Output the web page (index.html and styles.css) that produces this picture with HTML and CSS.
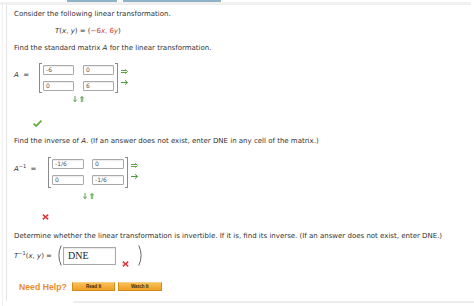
FILE: index.html
```html
<!DOCTYPE html>
<html>
<head>
<meta charset="utf-8">
<link rel="stylesheet" href="styles.css">
</head>
<body>
<div class="tabs"><div class="tab tab1"></div><div class="tab tab2"></div></div>
<div class="band"></div>
<div class="page">
  <div class="content">
    <p class="line l1">Consider the following linear transformation.</p>
    <p class="line l2 indent"><i>T</i>(<i>x</i>, <i>y</i>) = (<span class="red">−6<i>x</i>, 6<i>y</i></span>)</p>
    <p class="line l3">Find the standard matrix <i>A</i> for the linear transformation.</p>

    <div class="mrow m1">
      <div class="mlabel"><i>A</i> &nbsp;=</div>
      <div class="mwrap">
        <div class="matrix">
          <div class="br br-l"></div>
          <div class="grid">
            <div class="cell">-6</div><div class="cell">0</div>
            <div class="cell">0</div><div class="cell">6</div>
          </div>
          <div class="br br-r"></div>
          <div class="rowarrows">
            <svg width="7" height="5" viewBox="0 0 7 5"><path d="M0 1.5H5.5M0 3.5H5.5M4.3 0.3L6.6 2.5L4.3 4.7" fill="none" stroke="#4f9a3c" stroke-width="0.9"/></svg>
            <svg width="7" height="5" viewBox="0 0 7 5"><path d="M0 2.5H6M4 0.3L6.6 2.5L4 4.7" fill="none" stroke="#4f9a3c" stroke-width="1"/></svg>
          </div>
        </div>
        <div class="colarrows">
          <svg width="4" height="6" viewBox="0 0 4 6"><path d="M2 0V5.5M0.3 3.6L2 5.7L3.7 3.6" fill="none" stroke="#4f9a3c" stroke-width="0.9"/></svg>
          <svg width="4" height="6" viewBox="0 0 4 6"><path d="M1.3 0.8V6M2.7 0.8V6M0.2 2.4L2 0.3L3.8 2.4" fill="none" stroke="#4f9a3c" stroke-width="0.8"/></svg>
        </div>
      </div>
    </div>

    <div class="mark check">
      <svg width="9" height="7" viewBox="0 0 9 7"><path d="M0.6 3.6L3.1 6L8.4 0.7" fill="none" stroke="#5aaa3c" stroke-width="1.7"/></svg>
    </div>

    <p class="line l4">Find the inverse of <i>A</i>. (If an answer does not exist, enter DNE in any cell of the matrix.)</p>

    <div class="mrow m2">
      <div class="mlabel"><i>A</i><sup>−1</sup> &nbsp;=</div>
      <div class="mwrap">
        <div class="matrix">
          <div class="br br-l"></div>
          <div class="grid">
            <div class="cell">-1/6</div><div class="cell">0</div>
            <div class="cell">0</div><div class="cell">-1/6</div>
          </div>
          <div class="br br-r"></div>
          <div class="rowarrows">
            <svg width="7" height="5" viewBox="0 0 7 5"><path d="M0 1.5H5.5M0 3.5H5.5M4.3 0.3L6.6 2.5L4.3 4.7" fill="none" stroke="#4f9a3c" stroke-width="0.9"/></svg>
            <svg width="7" height="5" viewBox="0 0 7 5"><path d="M0 2.5H6M4 0.3L6.6 2.5L4 4.7" fill="none" stroke="#4f9a3c" stroke-width="1"/></svg>
          </div>
        </div>
        <div class="colarrows">
          <svg width="4" height="6" viewBox="0 0 4 6"><path d="M2 0V5.5M0.3 3.6L2 5.7L3.7 3.6" fill="none" stroke="#4f9a3c" stroke-width="0.9"/></svg>
          <svg width="4" height="6" viewBox="0 0 4 6"><path d="M1.3 0.8V6M2.7 0.8V6M0.2 2.4L2 0.3L3.8 2.4" fill="none" stroke="#4f9a3c" stroke-width="0.8"/></svg>
        </div>
      </div>
    </div>

    <div class="mark cross1">
      <svg width="7" height="6" viewBox="0 0 7 6"><path d="M0.8 0.6L6.2 5.4M6.2 0.6L0.8 5.4" fill="none" stroke="#e0393a" stroke-width="1.5"/></svg>
    </div>

    <p class="line l5">Determine whether the linear transformation is invertible. If it is, find its inverse. (If an answer does not exist, enter DNE.)</p>

    <div class="trow">
      <div class="tlabel"><i>T</i><sup>−1</sup>(<i>x</i>, <i>y</i>) =</div>
      <svg class="paren" width="6" height="21" viewBox="0 0 6 21"><path d="M5.2 0.5Q0.6 10.5 5.2 20.5" fill="none" stroke="#555" stroke-width="0.9"/></svg>
      <div class="dne">DNE</div>
      <svg class="cross2" width="7" height="6" viewBox="0 0 7 6"><path d="M0.8 0.6L6.2 5.4M6.2 0.6L0.8 5.4" fill="none" stroke="#e0393a" stroke-width="1.5"/></svg>
      <svg class="paren rp" width="6" height="21" viewBox="0 0 6 21"><path d="M0.8 0.5Q5.4 10.5 0.8 20.5" fill="none" stroke="#555" stroke-width="0.9"/></svg>
    </div>

    <div class="help">
      <span class="need">Need Help?</span>
      <span class="btn">Read It</span>
      <span class="btn">Watch It</span>
    </div>
  </div>
  <div class="bottom"></div>
</div>
</body>
</html>
```
FILE: styles.css
```css
html, body {
  margin: 0;
  padding: 0;
  background: #fff;
}
body {
  width: 474px;
  height: 306px;
  overflow: hidden;
  font-family: "DejaVu Sans", Verdana, sans-serif;
  font-size: 7px;
  color: #333;
}
.tabs {
  display: flex;
  gap: 6px;
  height: 2px;
  padding-left: 67px;
}
.tab {
  height: 2px;
  background: #8fb2c6;
}
.tab1 { width: 50px; }
.tab2 { width: 98px; }
.band {
  height: 3px;
  margin-right: 3px;
  background: #f0f0f0;
}
.page {
  margin-left: 2px;
  border-left: 1px solid #f2f2f2;
  height: 301px;
  display: flex;
  flex-direction: column;
}
.content {
  margin-left: 3px;
  border-left: 1px solid #e4e4e4;
  padding-left: 7px;
  flex: 1;
}
.line {
  margin: 0;
  line-height: 10px;
  height: 10px;
  white-space: nowrap;
}
.l1 { margin-top: 4px; }
.l2 { margin-top: 7px; }
.l3 { margin-top: 6.5px; }
.indent { padding-left: 41px; }
.red { color: #c9413e; }
sup {
  font-size: 5px;
  vertical-align: 3px;
  line-height: 0;
}

.mrow {
  display: flex;
  align-items: flex-start;
}
.m1 { margin-top: 10.5px; }
.m2 { margin-top: 10.5px; }
.mlabel {
  white-space: nowrap;
  line-height: 10px;
}
.m1 .mlabel { width: 25px; margin-top: 7px; }
.m2 .mlabel { width: 34px; margin-top: 7px; }
.mwrap {
  display: flex;
  flex-direction: column;
}
.matrix {
  display: flex;
  align-items: stretch;
}
.br {
  width: 2px;
  border: 1px solid #8a8a8a;
}
.br-l { border-right: none; }
.br-r { border-left: none; }
.grid {
  display: grid;
  padding: 2px 1px;
}
.m1 .grid {
  grid-template-columns: 31px 31px;
  column-gap: 9px;
  row-gap: 6px;
}
.m2 .grid {
  grid-template-columns: 32px 32px;
  column-gap: 8px;
  row-gap: 6px;
  padding: 2px 1px 3px;
}
.cell {
  box-sizing: border-box;
  height: 10px;
  border: 1px solid #a9a9a9;
  border-radius: 1px;
  box-shadow: inset 0 1px 1px rgba(0,0,0,0.08);
  font-size: 6px;
  line-height: 7px;
  padding-left: 2px;
  color: #555;
  background: #fff;
}
.rowarrows {
  display: flex;
  flex-direction: column;
  gap: 6px;
  margin-left: 3px;
  padding-top: 6px;
}
.rowarrows svg { display: block; }
.colarrows {
  display: flex;
  justify-content: center;
  gap: 3px;
  padding-right: 10px;
}
.m1 .colarrows { margin-top: 3px; }
.m2 .colarrows { margin-top: 5px; }
.colarrows svg { display: block; }

.mark svg { display: block; }
.check { margin-top: 18px; margin-left: 19px; }
.l4 { margin-top: 9px; }
.cross1 { margin-top: 15px; margin-left: 28px; }
.l5 { margin-top: 11px; }

.trow {
  display: flex;
  align-items: center;
  margin-top: 4px;
  height: 22px;
}
.tlabel {
  white-space: nowrap;
  width: 42px;
  margin-top: 1px;
}
.paren { display: block; }
.dne {
  box-sizing: border-box;
  width: 53px;
  height: 18px;
  margin-left: 1px;
  border: 1px solid #a9a9a9;
  box-shadow: inset 0 1px 2px rgba(0,0,0,0.1);
  font-family: "Liberation Serif", "Times New Roman", serif;
  font-size: 10px;
  line-height: 16px;
  padding-left: 4px;
  color: #222;
}
.cross2 {
  display: block;
  margin-left: 6px;
  align-self: flex-end;
  margin-bottom: 0;
}
.rp { margin-left: 9px; }

.help {
  display: flex;
  align-items: center;
  margin-top: 15px;
  padding-left: 5px;
}
.need {
  font-family: "Liberation Sans", Arial, sans-serif;
  font-weight: bold;
  font-size: 8.7px;
  color: #e98c2c;
  margin-right: 5px;
  white-space: nowrap;
}
.btn {
  box-sizing: border-box;
  height: 8.5px;
  display: flex;
  align-items: center;
  justify-content: center;
  font-family: "Liberation Sans", Arial, sans-serif;
  font-weight: bold;
  font-size: 4.6px;
  color: #3a2a10;
  background: linear-gradient(#f8c056, #ef9f26);
  border: 1px solid #d58a1c;
  border-top-color: #f7cf84;
  margin-right: 2.5px;
}
.btn:nth-of-type(2) { width: 43.5px; }
.btn:nth-of-type(3) { width: 44px; }

.bottom {
  height: 2px;
  margin-left: 70px;
  margin-bottom: 3px;
  background: #ececec;
  border-left: 1px solid #f0f0f0;
}
```
